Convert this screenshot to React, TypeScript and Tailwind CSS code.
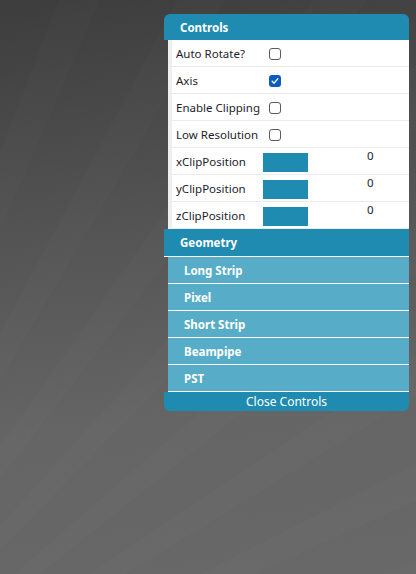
const toggles = [
  { label: "Auto Rotate?", checked: false },
  { label: "Axis", checked: true },
  { label: "Enable Clipping", checked: false },
  { label: "Low Resolution", checked: false },
];

const clips = ["xClipPosition", "yClipPosition", "zClipPosition"];

const geometry = ["Long Strip", "Pixel", "Short Strip", "Beampipe", "PST"];

function Checkbox({ checked }: { checked: boolean }) {
  if (checked) {
    return (
      <span className="ml-[6px] mt-[2px] flex h-[12px] w-[12px] shrink-0 items-center justify-center rounded-[3px] bg-[#0b5cc0]">
        <svg viewBox="0 0 12 12" className="h-[10px] w-[10px]">
          <path d="M2.6 6.4 L4.9 8.6 L9.3 3.4" fill="none" stroke="white" strokeWidth="1.7" strokeLinecap="round" strokeLinejoin="round" />
        </svg>
      </span>
    );
  }
  return <span className="ml-[6px] mt-[2px] h-[12px] w-[12px] shrink-0 rounded-[3px] border border-[#5a5a5a] bg-white" />;
}

function Row({ children }: { children: React.ReactNode }) {
  return (
    <div className="ml-[4px] flex h-[27px] items-center border-b border-l-4 border-b-[#ebebeb] border-l-[#efefef] bg-white">
      {children}
    </div>
  );
}

export default function App() {
  return (
    <div
      className="flex h-[574px] w-[416px] justify-end overflow-hidden bg-[image:repeating-conic-gradient(from_0deg_at_-60%_140%,rgba(255,255,255,0.012)_0deg_2.5deg,transparent_2.5deg_7deg),linear-gradient(172deg,#3d3d3d_0%,#555555_40%,#656565_70%,#686868_100%)] pr-[7px] pt-[14px]"
      style={{ fontFamily: '"Noto Sans", "DejaVu Sans", sans-serif' }}
    >
      <div className="w-[245px] self-start">
        <div className="flex h-[26px] items-center rounded-t-[6px] bg-[#1f8bb1] pl-[16px] pt-[1px] text-[11.5px] font-bold text-white">
          Controls
        </div>

        {toggles.map((t) => (
          <Row key={t.label}>
            <span className="w-[91px] shrink-0 whitespace-nowrap pl-[4px] pt-[2px] text-[11.5px] text-[#1c1c2c]">{t.label}</span>
            <Checkbox checked={t.checked} />
          </Row>
        ))}

        {clips.map((c) => (
          <Row key={c}>
            <span className="w-[91px] shrink-0 whitespace-nowrap pl-[4px] pt-[2px] text-[11.5px] text-[#1c1c2c]">{c}</span>
            <span className="mt-[2px] h-[19px] w-[45px] shrink-0 bg-[#1f8bb1]" />
            <span className="ml-[59px] self-start pt-[1px] text-[11.5px] leading-[14px] text-[#1c1c2c]">0</span>
          </Row>
        ))}

        <div className="flex h-[28px] items-center border-b border-white bg-[#1f8bb1] pl-[16px] pt-[1px] text-[11.5px] font-bold text-white">
          Geometry
        </div>

        {geometry.map((g) => (
          <div
            key={g}
            className="ml-[4px] flex h-[27px] items-center border-b border-white bg-[#57adc7] pl-[16px] pt-[1px] text-[11.5px] font-bold text-white"
          >
            {g}
          </div>
        ))}

        <div className="flex h-[19px] items-center justify-center rounded-b-[6px] bg-[#1f8bb1] text-[12px] text-white">
          Close Controls
        </div>
      </div>
    </div>
  );
}
